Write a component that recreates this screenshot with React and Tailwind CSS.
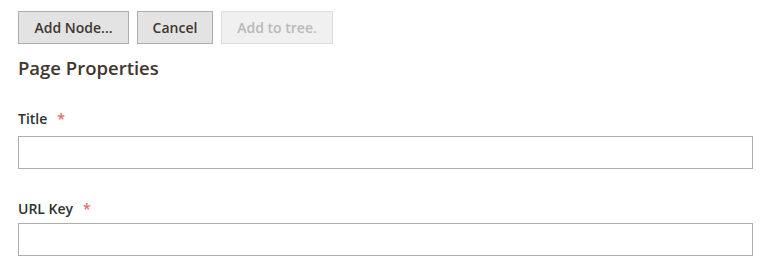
export default function App() {
  const font = { fontFamily: '"Open Sans", "Liberation Sans", sans-serif' };
  return (
    <div style={font} className="w-[768px] h-[272px] bg-white px-[18px] pt-[11px] text-[#303030]">
      <div className="flex gap-2">
        <button className="h-[33px] w-[111px] border border-[#adadad] bg-[#e3e3e3] text-[14px] font-semibold text-[#41362f]">Add Node...</button>
        <button className="h-[33px] w-[76px] border border-[#adadad] bg-[#e3e3e3] text-[14px] font-semibold text-[#41362f]">Cancel</button>
        <button className="h-[33px] w-[112px] border border-[#dcdcdc] bg-[#f0f0f0] text-[14px] font-semibold text-[#b9b9b9]">Add to tree.</button>
      </div>
      <h2 className="mt-[11px] text-[18.5px] font-semibold leading-[26px] text-[#41362f]">Page Properties</h2>
      <div className="mt-[28px]">
        <label className="flex items-center text-[14px] font-semibold leading-[20px] text-[#303030]">
          Title<span className="ml-[10px] text-[#e06c6c]">*</span>
        </label>
        <input className="mt-[7px] block h-[33px] w-[735px] border border-[#adadad] bg-white" />
      </div>
      <div className="mt-[30px]">
        <label className="flex items-center text-[14px] font-semibold leading-[20px] text-[#303030]">
          URL Key<span className="ml-[10px] text-[#e06c6c]">*</span>
        </label>
        <input className="mt-[4px] block h-[33px] w-[735px] border border-[#adadad] bg-white" />
      </div>
    </div>
  );
}
